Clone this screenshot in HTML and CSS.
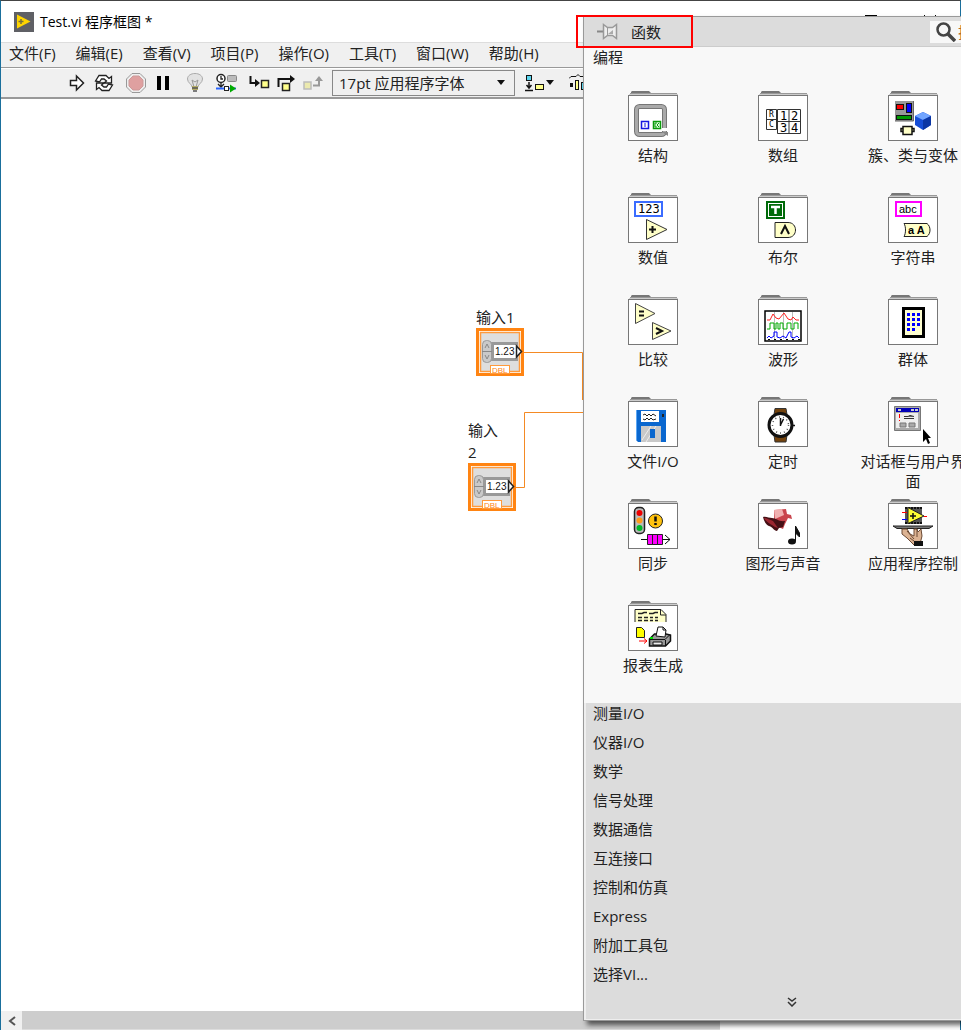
FILE: index.html
```html
<!DOCTYPE html>
<html lang="zh-CN">
<head>
    <meta charset="UTF-8">
    <meta name="viewport" content="width=device-width, initial-scale=1.0">
    <title>Test.vi 程序框图 *</title>
    <link rel="stylesheet" href="styles.css">
</head>
<body>
    <!-- Shared shapes -->
    <svg class="defs" aria-hidden="true">
        <symbol id="folder" viewBox="0 0 50 52">
            <path d="M3 4V2l1-1h17l2 2v1z" fill="#777"/>
            <path d="M2 3.500H49" stroke="#999"/>
            <path d="M1 4.500H50" stroke="#ccc"/>
            <rect x="0.500" y="5.500" width="49" height="45" fill="#fff" stroke="#777"/>
        </symbol>
        <symbol id="terminal" viewBox="0 0 48 48">
            <rect x="1.500" y="1.500" width="45" height="45" fill="#fff" stroke="#ff8412" stroke-width="3"/>
            <rect x="4.500" y="4.500" width="39" height="39" fill="#dedede" stroke="#ff9a3c" stroke-width="1.500"/>
            <path d="M15 14h27v19H15z" fill="#999"/>
            <rect x="18" y="17" width="22" height="13" fill="#fff"/>
            <rect x="6.500" y="12.500" width="9" height="22" rx="4" fill="#c9c9c9" stroke="#999"/>
            <path d="M6 23.500h10M9 20l2-4 2 4M9 27l2 4 2-4" fill="none" stroke="#888"/>
            <path d="M40.500 18v11l5-5.500z" fill="#fff" stroke="#222" stroke-width="1.500"/>
            <rect x="14.500" y="37.500" width="19" height="8" fill="#fff" stroke="#ff9a3c"/>
        </symbol>
    </svg>

    <div class="window">
        <header class="titlebar">
            <svg class="app-icon" width="20" height="20" viewBox="0 0 20 20"><path d="M0 0h20v20H0z" fill="#5f6065"/><path d="M3 2.500v14L16.500 9.500z" fill="#ffd500"/><path d="M4.500 9.500h5M7 7v5" stroke="#77703b" stroke-width="1.500"/></svg>
            <h1 class="title">Test.vi 程序框图 *</h1>
            <div class="controls">
                <button class="control" aria-label="最大化"><svg width="12" height="13"><path d="M.5 0v12.500h11V0M0 .5h12" fill="none" stroke="#000"/></svg></button>
                <button class="control" aria-label="关闭"><svg width="12" height="13"><path d="M0 0l12 12M12 0L0 12" stroke="#000"/></svg></button>
            </div>
        </header>

        <nav class="menubar">
            <a href="#">文件(F)</a>
            <a href="#">编辑(E)</a>
            <a href="#">查看(V)</a>
            <a href="#">项目(P)</a>
            <a href="#">操作(O)</a>
            <a href="#">工具(T)</a>
            <a href="#">窗口(W)</a>
            <a href="#">帮助(H)</a>
        </nav>

        <div class="toolbar">
            <div class="tools">
                <button class="tool" aria-label="运行"><svg width="16" height="18" viewBox="0 0 16 18"><path d="M1.500 6.500h6v-4.500l7 7-7 7v-4.500h-6z" fill="#fff" stroke="#222" stroke-width="1.500"/></svg></button>
                <button class="tool" aria-label="连续运行"><svg width="20" height="18" viewBox="0 0 20 18"><path d="M1.500 7L5 1.500h7l3 3 2.500-2V9H10l2.500-2L10 5H7.500L5.500 8z" fill="#fff" stroke="#222" stroke-width="1.300"/><path d="M18.500 11L15 16.500H8l-3-3-2.500 2V9H10l-2.500 2L10 13h2.500l2-3z" fill="#fff" stroke="#222" stroke-width="1.300"/></svg></button>
            </div>
            <div class="tools">
                <button class="tool" aria-label="中止"><svg width="20" height="20" viewBox="0 0 20 20"><path d="M6 .5h8L19.500 6v8L14 19.500H6L.5 14V6z" fill="#eee" stroke="#999"/><path d="M7 3h6l4 4v6l-4 4H7l-4-4V7z" fill="#dfa0a0" stroke="#c99"/></svg></button>
                <button class="tool" aria-label="暂停"><svg width="12" height="14" viewBox="0 0 12 14"><path d="M0 0h4v14H0zM8 0h4v14H8z" fill="#000"/></svg></button>
            </div>
            <div class="tools">
                <button class="tool" aria-label="高亮显示执行过程"><svg width="16" height="20" viewBox="0 0 16 20"><path d="M5 14c0-3-4.500-4-4.500-8C.5 2.500 4 .5 8 .5s7.500 2 7.500 5.500c0 4-4.500 5-4.500 8z" fill="#e2e2e2" stroke="#aaa"/><path d="M7 14L5 7l3 2 3-2-2 7" fill="none" stroke="#999"/><path d="M5 13h6v4H5z" fill="#b5ad67"/><path d="M5 15h6M6 18h4" stroke="#555" stroke-width="1.500"/></svg></button>
            </div>
            <div class="tools">
                <button class="tool" aria-label="保存连线值"><svg width="22" height="20" viewBox="0 0 22 20"><circle cx="5" cy="5.500" r="4" fill="#fff" stroke="#222" stroke-width="1.500"/><path d="M5 3v3h2M5 10v4M2 11l3 3 3-3" fill="none" stroke="#222" stroke-width="1.300"/><rect x="11.500" y="2.500" width="9" height="6" rx="1" fill="#bbb" stroke="#888"/><path d="M0 15.500h20" stroke="#2864ff" stroke-width="2"/><rect x="8.500" y="13.500" width="4" height="4" fill="#fff" stroke="#222"/><path d="M14 11.500v8l6-4z" fill="#0a0"/></svg></button>
            </div>
            <div class="tools">
                <button class="tool" aria-label="单步步入"><svg width="21" height="16" viewBox="0 0 21 16"><path d="M1.500 1v7H7" fill="none" stroke="#111" stroke-width="2"/><path d="M6 4v8l5-4z" fill="#111"/><rect x="12.500" y="5.500" width="7" height="7" fill="#ffff8c" stroke="#222" stroke-width="1.500"/></svg></button>
                <button class="tool" aria-label="单步步过"><svg width="19" height="17" viewBox="0 0 19 17"><path d="M1.500 12V4H14" fill="none" stroke="#111" stroke-width="2"/><path d="M13 0v8l5-4z" fill="#111"/><rect x="5.500" y="8.500" width="7" height="7" fill="#ffff8c" stroke="#222" stroke-width="1.500"/></svg></button>
                <button class="tool" aria-label="单步步出"><svg width="21" height="16" viewBox="0 0 21 16"><rect x="1" y="7" width="7" height="7" fill="#ebe9ae" stroke="#bbb" stroke-width="1.500"/><path d="M10 10.500h6V5" fill="none" stroke="#999" stroke-width="2"/><path d="M12 6h8l-4-5z" fill="#999"/></svg></button>
            </div>
            <div class="font-picker">
                <select class="font-select" aria-label="文本设置">
                    <option>17pt 应用程序字体</option>
                </select>
                <svg class="font-arrow" width="8" height="5"><path d="M0 0h8L4 5z" fill="#111"/></svg>
            </div>
            <button class="tool wide" aria-label="对齐对象"><svg width="30" height="18" viewBox="0 0 30 18"><rect x="1.500" y="1.500" width="5" height="5" fill="#5bd5ee" stroke="#111"/><path d="M4 8v6M1.500 11L4 14l2.500-3M0 16.500h8" fill="none" stroke="#111" stroke-width="1.500"/><rect x="10.500" y="10.500" width="8" height="5" fill="#ffff8c" stroke="#111"/><path d="M21 6h8l-4 5z" fill="#111"/></svg></button>
            <button class="tool wide" aria-label="分布对象"><svg width="30" height="18" viewBox="0 0 30 18"><path d="M0 4.500l2-2h5l2-2 2 2h5l2 2" fill="none" stroke="#111"/><path d="M1 9h3v4H1zM12 9h3v4h-3z" fill="#111"/><rect x="6.500" y="6.500" width="3" height="9" fill="#ffff8c" stroke="#111"/><rect x="12.500" y="8.500" width="4" height="7" fill="#5bd5ee" stroke="#111"/></svg></button>
        </div>

        <main class="diagram">
            <svg class="wires" width="600" height="420"><path d="M521 253.500H581.500V301M514 388.500H523.500V313.500H590" fill="none" stroke="#f48a24"/></svg>
            <div class="node node-1">
                <div class="node-label">输入1</div>
                <svg width="48" height="48"><use href="#terminal"/><text x="19" y="27" font-size="10" fill="#111">1.23</text><text x="16" y="45" font-size="8" fill="#ff8412">DBL</text></svg>
            </div>
            <div class="node node-2">
                <div class="node-label">输入<br>2</div>
                <svg width="48" height="48"><use href="#terminal"/><text x="19" y="27" font-size="10" fill="#111">1.23</text><text x="16" y="45" font-size="8" fill="#ff8412">DBL</text></svg>
            </div>
        </main>

        <div class="hscroll">
            <button class="scroll-left" aria-label="向左滚动"><svg width="8" height="10"><path d="M7 1L2 5l5 4" fill="none" stroke="#555" stroke-width="2"/></svg></button>
            <div class="scroll-thumb"></div>
        </div>
    </div>

    <!-- Functions palette -->
    <aside class="palette">
        <div class="palette-head">
            <button class="pin" aria-label="固定"><svg width="21" height="18" viewBox="0 0 21 18"><path d="M0 8.500h7" stroke="#888" stroke-width="2"/><path d="M6.500 1.500l4 3h5l4-3v14l-4-3h-5l-4 3z" fill="#eee" stroke="#999" stroke-width="1.500"/><path d="M10.500 5v7" stroke="#999"/><path d="M11 11l5-4v4z" fill="#aaa"/></svg></button>
            <h2 class="palette-title">函数</h2>
            <button class="search"><svg width="20" height="20" viewBox="0 0 20 20"><circle cx="7.500" cy="7.500" r="6" fill="#f7f7f7" stroke="#444" stroke-width="2.500"/><path d="M12 12l7 7" stroke="#444" stroke-width="3.500"/></svg><span>搜索</span></button>
        </div>
        <h3 class="section">编程</h3>

        <div class="functions">
            <a class="function" href="#">
                <svg width="50" height="52"><use href="#folder"/><rect x="8.500" y="16.500" width="28" height="28" rx="3" fill="#fff" stroke="#777" stroke-width="5"/><rect x="8.500" y="16.500" width="28" height="28" rx="3" fill="none" stroke="#aaa" stroke-width="3"/><path d="M32 38h8v3h-8z" fill="#fff"/><path d="M34 42h6v4z" fill="#888"/><rect x="13.500" y="31.500" width="7" height="7" fill="#fff" stroke="#1717e0" stroke-width="1.500"/><path d="M17 33v4" stroke="#1717e0"/><rect x="25.500" y="31.500" width="7" height="7" fill="#dfd" stroke="#0a9a0a" stroke-width="1.500"/><path d="M31 33l-2 2 2 2M29 33h-2v4h2" fill="none" stroke="#0a9a0a"/></svg>
                <span>结构</span>
            </a>
            <a class="function" href="#">
                <svg width="50" height="52"><use href="#folder"/><path d="M8.500 19.500h10v20h-10zM8.500 29.500h10M19.500 19.500h23v24h-23zM31 19.500v24M19.500 31.500h23" fill="#fff" stroke="#333"/><g class="pixel"><text x="11" y="27" font-size="8">R</text><text x="11" y="37" font-size="8">C</text><text x="22" y="30" font-size="12">1</text><text x="33" y="30" font-size="12">2</text><text x="22" y="42" font-size="12">3</text><text x="33" y="42" font-size="12">4</text></g></svg>
                <span>数组</span>
            </a>
            <a class="function" href="#">
                <svg width="50" height="52"><use href="#folder"/><path d="M7 11h19v20H7z" fill="#999"/><path d="M25.500 11v20H7" fill="none" stroke="#666"/><g stroke="#111"><rect x="8.500" y="14.500" width="7" height="5" fill="#f00"/><rect x="18.500" y="13.500" width="5" height="9" fill="#00f"/><rect x="8.500" y="25.500" width="15" height="4" fill="#090"/></g><path d="M35 22l8 4v9l-8 5-8-5v-9z" fill="#164ed6"/><path d="M35 22l8 4-8 4-8-4z" fill="#72a5ff"/><path d="M35 30l8-4v9l-8 5z" fill="#0b36a4"/><path d="M15 36.500h9v8h-9zM15 38.500h-2v3h2M24 38.500h2v3h-2" fill="#ffffc8" stroke="#111" stroke-width="1.500"/></svg>
                <span>簇、类与变体</span>
            </a>
            <a class="function" href="#">
                <svg width="50" height="52"><use href="#folder"/><rect x="7" y="10" width="27" height="14" fill="#fff" stroke="#3b6cff" stroke-width="2"/><text class="pixel" x="10" y="21" font-size="12">123</text><path d="M18.500 27.500v20L39 37.500z" fill="#ffffc8" stroke="#333"/><path d="M21 37.500h7M24.500 34v7" stroke="#111" stroke-width="2"/></svg>
                <span>数值</span>
            </a>
            <a class="function" href="#">
                <svg width="50" height="52"><use href="#folder"/><path d="M8 9h19v18H8z" fill="#006b0a"/><rect x="10.500" y="11.500" width="14" height="13" fill="none" stroke="#fff"/><path d="M13 15h9M17.500 14v8" stroke="#fff" stroke-width="2.500"/><path d="M17 30.500h13c10 0 10 15 0 15H17z" fill="#ffffc8" stroke="#222"/><path d="M23 42l4-8 4 8" fill="none" stroke="#111" stroke-width="2"/></svg>
                <span>布尔</span>
            </a>
            <a class="function" href="#">
                <svg width="50" height="52"><use href="#folder"/><rect x="8" y="10" width="25" height="14" fill="#fff" stroke="#f0f" stroke-width="2"/><text x="11" y="21" font-size="11">abc</text><path d="M16 31.500h23c4 3 4 10 0 13H16c2-3 2-10 0-13z" fill="#ffffc8" stroke="#222"/><text class="strong" x="20" y="42" font-size="11">a A</text></svg>
                <span>字符串</span>
            </a>
            <a class="function" href="#">
                <svg width="50" height="52"><use href="#folder"/><path d="M7.500 9.500v20L27 19.500zM24.500 28.500v17L43 37z" fill="#ffffc8" stroke="#444"/><path d="M11 17.500h5M11 21.500h5" stroke="#111" stroke-width="2"/><path d="M28 34l6 3-6 3" fill="none" stroke="#111" stroke-width="2"/></svg>
                <span>比较</span>
            </a>
            <a class="function" href="#">
                <svg width="50" height="52"><use href="#folder"/><rect x="7" y="17" width="36" height="30" fill="#fff" stroke="#000" stroke-width="1.500"/><path d="M16.500 18v27M25.500 18v27M34.500 18v27" stroke="#bbb"/><path d="M9 26h3l3-6 3 4 3 1 5-6 4 6 3 1 2-3 3 3h3" fill="none" stroke="#f22"/><path d="M9 35h3v-6h4v6h2v-6h2v6h2v-6h3v6h4v-6h4v6h3v-6h4v6" fill="none" stroke="#0a0"/><path d="M9 44l2-2 2 2 3-2v-4h3v5l3 1 3-2 3 2 3-6h2v5l3 1 3-2 2 2" fill="none" stroke="#00f"/><path d="M10 45.500h32" stroke="#000" stroke-dasharray="2 4"/></svg>
                <span>波形</span>
            </a>
            <a class="function" href="#">
                <svg width="50" height="52"><use href="#folder"/><rect x="15.500" y="14.500" width="20" height="28" fill="#ffffd0" stroke="#000" stroke-width="3"/><path d="M19 20.500h3m2 0h3m2 0h3M19 25.500h3m2 0h3m2 0h3M19 30.500h3m2 0h3m2 0h3M19 35.500h3m2 0h3" stroke="#00f" stroke-width="3"/></svg>
                <span>群体</span>
            </a>
            <a class="function" href="#">
                <svg width="50" height="52"><use href="#folder"/><path d="M8 14h30v32H10l-2-2z" fill="#0a67cf"/><path d="M8.500 14v30" stroke="#5ba7f5"/><path d="M13 15h18v11H13z" fill="#fff"/><path d="M15 19l2-1 2 2 2-2 2 2 2-2 3 2M15 23l2 1 2-2 2 2 2-2 2 2 3-1" fill="none" stroke="#222"/><path d="M13 30h20v16H13z" fill="#c9c9c9"/><path d="M14 44l9-14M18 46l10-16" stroke="#eee"/><path d="M22 33h5v9h-5z" fill="#0a67cf"/><path d="M34 18h2v3h-2z" fill="#222"/></svg>
                <span>文件I/O</span>
            </a>
            <a class="function" href="#">
                <svg width="50" height="52"><use href="#folder"/><path d="M17 12.500h11l1 6H16zM16 39h13l-1 7H17z" fill="#72420d" stroke="#333"/><circle cx="22.500" cy="29" r="11.500" fill="#fff" stroke="#111" stroke-width="3"/><circle cx="22.500" cy="29" r="8" fill="none" stroke="#555" stroke-width="1.500" stroke-dasharray="1 3"/><path d="M22.500 29l3-6M22.500 30v-8M34 29.500h3" stroke="#111" stroke-width="1.500"/></svg>
                <span>定时</span>
            </a>
            <a class="function" href="#">
                <svg width="50" height="52"><use href="#folder"/><path d="M6.500 10.500h26v24h-26z" fill="#aaa" stroke="#777"/><path d="M8 12h23v4H8z" fill="#0000b8"/><path d="M10 14h3M23 14h3M27 14h3" stroke="#ccc" stroke-width="2"/><path d="M8 17h22v15H8z" fill="#eee"/><path d="M11.500 18v4M11.500 24v1" stroke="#f00"/><path d="M16 20.500h4l2-1 4 1M16 22.500h10" stroke="#333"/><path d="M12 27h6v4h-6zM21 27h6v4h-6z" fill="#aaa" stroke="#777"/><path d="M35 33v13l3-3 2 5 2-1-2-5h3z" fill="#000"/></svg>
                <span>对话框与用户界面</span>
            </a>
            <a class="function" href="#">
                <svg width="50" height="52"><use href="#folder"/><rect x="6.500" y="9.500" width="10" height="26" rx="4" fill="#bbb" stroke="#222" stroke-width="1.500"/><circle cx="11.500" cy="15" r="3" fill="#e00"/><circle cx="11.500" cy="22.500" r="3" fill="#ff9b19"/><circle cx="11.500" cy="30" r="3" fill="#00b828"/><circle cx="27.500" cy="23" r="7" fill="#ffc20e" stroke="#222"/><path d="M27.500 18.500v5M27.500 25v2" stroke="#111" stroke-width="2.500"/><path d="M13 41.500h29M37 37l5 4.500-5 4.500" fill="none" stroke="#111"/><path d="M19.500 36.500h15v10h-15zM24.500 36.500v10M29.500 36.500v10" fill="#f0f" stroke="#222"/></svg>
                <span>同步</span>
            </a>
            <a class="function" href="#">
                <svg width="50" height="52"><use href="#folder"/><path d="M16 12l12-1 1 5 4 1 1 4-4-1-3 6-2 5-9-4z" fill="#c9444c"/><path d="M16 12l8-1 2 6-9 4z" fill="#f0b0b0"/><path d="M5 19c3-1 6 1 9 1 4 0 7 4 13 3l-2 6-4 1-2 3c-3 0-4-4-8-5-3-1-5-5-6-9z" fill="#451015"/><path d="M6 20c3 0 6 2 9 3l5 7-3-1c-4-3-8-4-11-9z" fill="#9b2630"/><ellipse cx="34" cy="43.500" rx="4" ry="3" fill="#111"/><path d="M37.500 43V28l4 7v4l-4-4" fill="#111" stroke="#111"/></svg>
                <span>图形与声音</span>
            </a>
            <a class="function" href="#">
                <svg width="50" height="52"><use href="#folder"/><path d="M17 9h17v17H17z" fill="#555"/><path d="M17 10h17M17 25h17" stroke="#111" stroke-width="2" stroke-dasharray="2 1"/><path d="M20 9.500v16L36 18z" fill="#ff3" stroke="#222"/><path d="M22 18h6M25 15v6" stroke="#111" stroke-width="1.500"/><path d="M14 14.500h5M36 18.500h3" stroke="#f00"/><path d="M14 21.500h5" stroke="#00f"/><path d="M5 28h40l-4 2.500H9z" fill="#777" stroke="#222"/><path d="M14 31h5l3 5 4 2v-7h3l1 3 3-3 1 7-2 8-6 1-7-7-5-4z" fill="#dcb393" stroke="#6b4a34"/><path d="M19 33l7 8M29 31v8M22 40l4 3" fill="none" stroke="#6b4a34"/><path d="M26 43h9v5h-9z" fill="#111"/></svg>
                <span>应用程序控制</span>
            </a>
            <a class="function" href="#">
                <svg width="50" height="52"><use href="#folder"/><path d="M7 22V9.500h26l5 5V22" fill="#ffffc8" stroke="#222"/><path d="M32.500 9v6H38" fill="none" stroke="#222"/><path d="M10 13.500h4l2-1h3M21 13.500h4l2-1h3M10 17.500h4m2 0h4m2 0h3m2 0h3M10 20.500h4m2 0h4m2 0h3m2 0h3" stroke="#222" stroke-width="1.500"/><path d="M8.500 27.500h5l3 3v7h-8z" fill="#ff0" stroke="#222"/><path d="M11 41h8M16 38.500l3 2.500-3 2.500" fill="none" stroke="#f00"/><path d="M21.500 39l5-5H38l4.500 1v6l-5 5h-16z" fill="#999" stroke="#111" stroke-width="1.500"/><path d="M28 36l2-9h5l3 3-1 7z" fill="#fff" stroke="#111"/><path d="M35 27v3h3M21 39.500h16l5-5M37.500 40v6" fill="none" stroke="#111"/><path d="M25 42h9v3h-9z" fill="#eee" stroke="#111"/><path d="M22 37h3v2h-3z" fill="#0d0"/></svg>
                <span>报表生成</span>
            </a>
        </div>

        <nav class="categories">
            <a href="#">测量I/O</a>
            <a href="#">仪器I/O</a>
            <a href="#">数学</a>
            <a href="#">信号处理</a>
            <a href="#">数据通信</a>
            <a href="#">互连接口</a>
            <a href="#">控制和仿真</a>
            <a href="#">Express</a>
            <a href="#">附加工具包</a>
            <a href="#">选择VI...</a>
            <button class="more" aria-label="展开"><svg width="10" height="10"><path d="M1 1l4 3 4-3M1 5l4 4 4-4" fill="none" stroke="#333" stroke-width="1.500"/></svg></button>
        </nav>
    </aside>
    <div class="highlight"></div>
</body>
</html>
```
FILE: styles.css
```css
* {
    box-sizing: border-box;
}
body {
    position: relative;
    margin: 0;
    min-height: 100vh;
    overflow: hidden;
    background: #fff;
    color: #222;
    font-family: "Open Sans", "Noto Sans CJK SC", sans-serif;
    font-size: 15px;
    line-height: 20px;
}
a {
    color: inherit;
    text-decoration: none;
}
button {
    padding: 0;
    border: none;
    background: none;
    color: inherit;
    font: inherit;
}
h1, h2, h3 {
    margin: 0;
    font-size: 15px;
    font-weight: normal;
}
svg {
    display: block;
    flex: none;
}
svg text {
    font-family: "Liberation Sans", sans-serif;
}
svg .pixel,
.pixel text {
    font-family: "DejaVu Sans Mono", monospace;
}
svg .strong {
    font-weight: bold;
}
.defs {
    position: absolute;
    width: 0;
    height: 0;
}

/* Block diagram window */
.window {
    display: flex;
    flex-direction: column;
    min-height: 100vh;
    border: 1px solid #1a6f9c;
    border-top-color: #444;
    border-bottom: none;
}
.titlebar {
    display: flex;
    align-items: center;
    height: 41px;
    padding: 0 24px 0 13px;
    color: #000;
}
.title {
    margin-left: 6px;
    font-size: 14px;
}
.controls {
    display: flex;
    gap: 47px;
    margin-left: auto;
}
.menubar {
    display: flex;
    gap: 20px;
    height: 26px;
    padding: 0 8px;
    border-top: 1px solid #ddd;
    border-bottom: 1px solid #999;
    background: #f0f0f0;
}
.toolbar {
    display: flex;
    align-items: center;
    gap: 6px;
    height: 31px;
    padding-left: 63px;
    border-top: 1px solid #fff;
    border-bottom: 2px solid #999;
    background: #f0f0f0;
}
.tools {
    display: flex;
    gap: 1px;
}
.tool {
    display: flex;
    align-items: center;
    justify-content: center;
    width: 26px;
    height: 24px;
}
.tool.wide {
    width: 38px;
}
.font-picker {
    position: relative;
}
.font-select {
    appearance: none;
    width: 183px;
    height: 26px;
    padding: 0 6px;
    border: 1px solid #888;
    border-radius: 0;
    background: #f0f0f0;
    color: #222;
    font: inherit;
}
.font-arrow {
    position: absolute;
    top: 10px;
    right: 10px;
    pointer-events: none;
}
.diagram {
    position: relative;
    flex: 1;
}
.wires {
    position: absolute;
    top: 0;
    left: 0;
}
.node {
    position: absolute;
    line-height: 22px;
}
.node-1 {
    top: 207px;
    left: 475px;
}
.node-2 {
    top: 320px;
    left: 467px;
}
.hscroll {
    display: flex;
    width: 75%;
    height: 19px;
    background: #f0f0f0;
}
.scroll-left {
    display: flex;
    align-items: center;
    justify-content: center;
    width: 21px;
}
.scroll-thumb {
    flex: 1;
    background: #cdcdcd;
    border-bottom: 1px solid #ddd;
}

/* Functions palette */
.palette {
    position: absolute;
    top: 16px;
    left: 583px;
    width: 416px;
    border: 1px solid #999;
    background: #f8f8f8;
    box-shadow: 4px 4px 5px rgba(0, 0, 0, 0.6);
}
.palette-head {
    display: flex;
    align-items: center;
    height: 30px;
    padding-left: 13px;
    border-bottom: 1px solid #ccc;
    background: #dcdcdc;
}
.palette-title {
    margin-left: 13px;
}
.search {
    display: flex;
    align-items: center;
    gap: 2px;
    width: 68px;
    height: 22px;
    margin-left: auto;
    padding-left: 6px;
    background: #f7f7f7;
    color: #b86a2a;
}
.section {
    padding: 0 9px;
    line-height: 20px;
}
.functions {
    display: grid;
    grid-template-columns: repeat(3, 130px);
    grid-auto-rows: 83px;
    row-gap: 19px;
    padding: 23px 0 20px 4px;
}
.function {
    display: flex;
    flex-direction: column;
    align-items: center;
    gap: 3px;
    text-align: center;
}
.function span {
    width: 110px;
}
.categories {
    display: flex;
    flex-direction: column;
    padding-bottom: 8px;
    border: 1px solid #eee;
    border-width: 0 0 1px 2px;
    background: #dcdcdc;
}
.categories a {
    height: 29px;
    padding: 0 7px;
}
.more {
    display: flex;
    align-items: center;
    justify-content: center;
    height: 18px;
}
.highlight {
    position: absolute;
    top: 15px;
    left: 576px;
    width: 117px;
    height: 33px;
    border: 2px solid #f00;
    pointer-events: none;
}
```
